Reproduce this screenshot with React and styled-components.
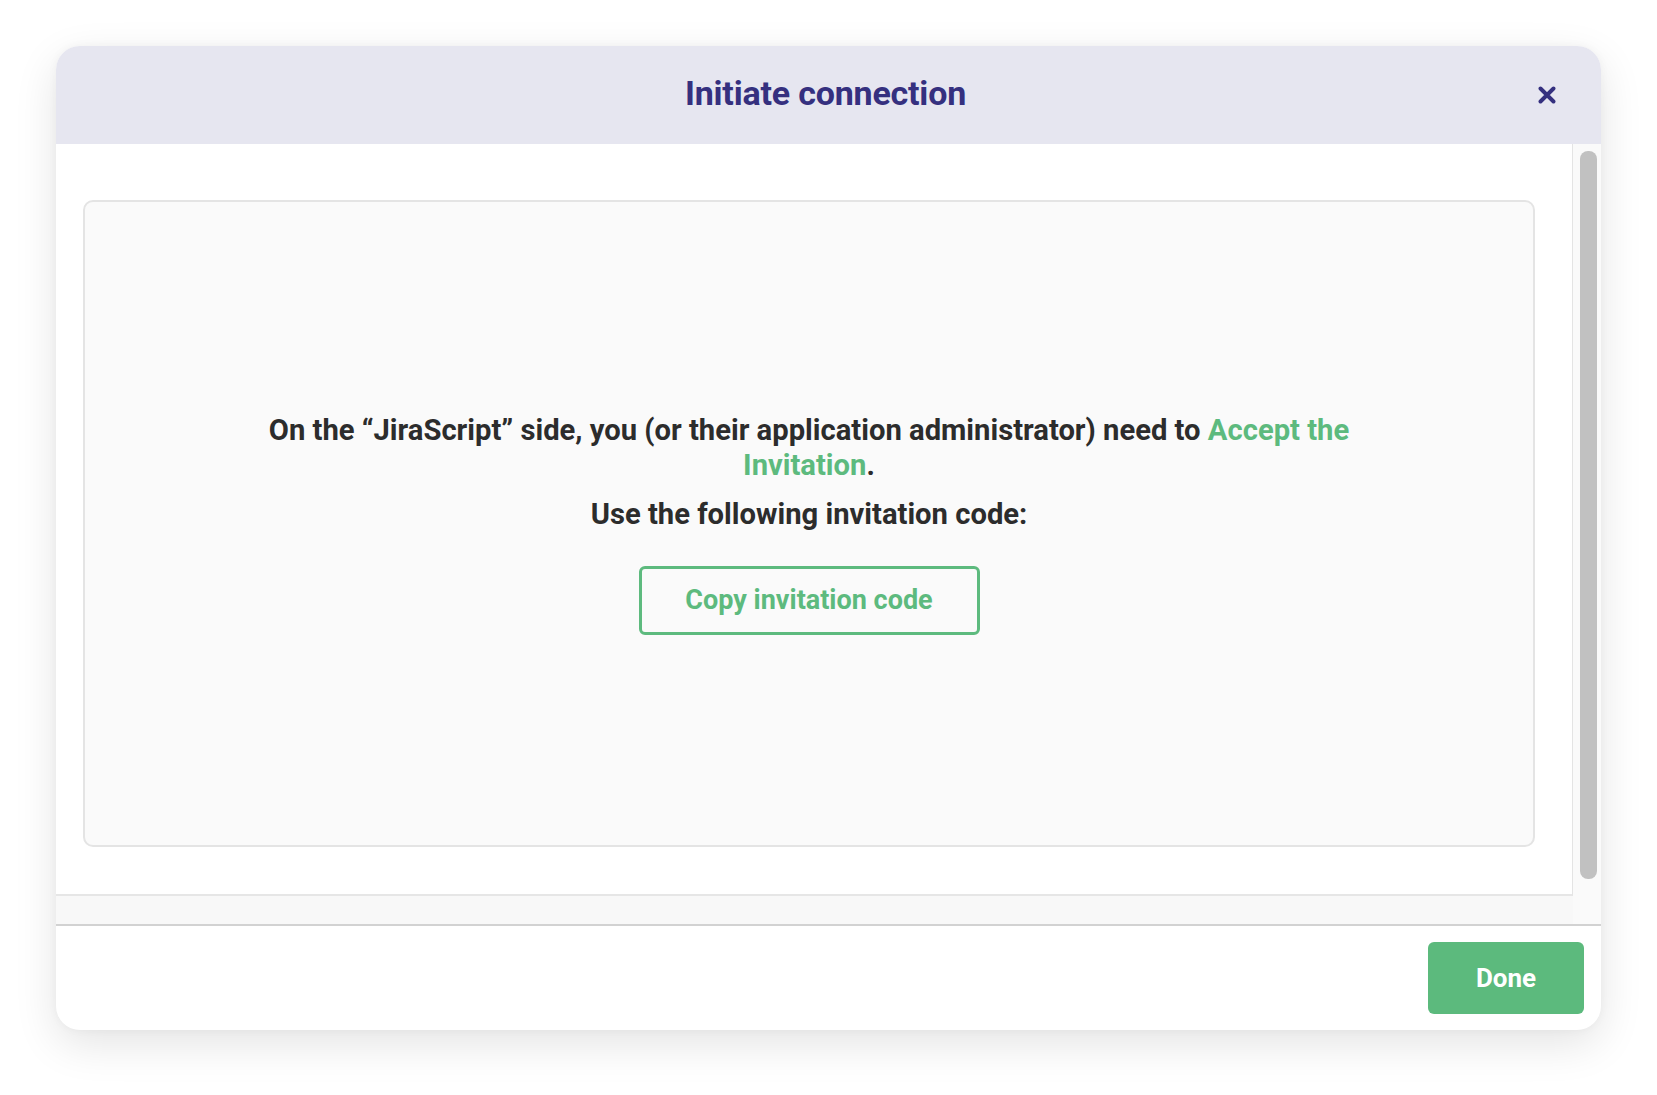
import styled, { createGlobalStyle } from "styled-components";

const GlobalStyle = createGlobalStyle`
  html, body {
    margin: 0;
    padding: 0;
    background: #ffffff;
  }
  body {
    font-family: Roboto, "Liberation Sans", sans-serif;
    -webkit-font-smoothing: antialiased;
  }
`;

const Page = styled.div`
  width: 1657px;
  height: 1095px;
  padding: 46px 56px 0;
  box-sizing: border-box;
`;

const Modal = styled.div`
  width: 1545px;
  height: 984px;
  display: flex;
  flex-direction: column;
  background: #fff;
  border-radius: 24px;
  overflow: hidden;
  box-shadow: 0 14px 44px rgba(0, 0, 0, 0.11), 0 0 10px rgba(0, 0, 0, 0.04);
`;

const Header = styled.header`
  height: 98px;
  flex: none;
  display: grid;
  grid-template-columns: 1fr auto 1fr;
  align-items: center;
  background: #e6e6f0;
`;

const Title = styled.h1`
  grid-column: 2;
  margin: 0 0 4px;
  font-size: 34px;
  font-weight: 700;
  color: #35307f;
  letter-spacing: -0.2px;
  transform: translateX(-3px);
`;

const CloseButton = styled.button`
  grid-column: 3;
  justify-self: end;
  margin-right: 44px;
  border: none;
  background: none;
  padding: 0;
  width: 20px;
  height: 20px;
  display: flex;
  align-items: center;
  justify-content: center;
  color: #35307f;
  cursor: pointer;
`;

const ScrollRegion = styled.div`
  flex: 1;
  display: flex;
  min-height: 0;
`;

const ScrollColumn = styled.div`
  flex: 1;
  display: flex;
  flex-direction: column;
`;

const Viewport = styled.div`
  flex: 1;
  display: flex;
  padding: 56px 37px 47px 27px;
  border-right: 1px solid #e4e4e4;
  border-bottom: 2px solid #e6e6e6;
  background: #fff;
`;

const HTrack = styled.div`
  height: 28px;
  background: #f8f8f8;
`;

const VTrack = styled.div`
  width: 28px;
  flex: none;
  background: #fafafa;
  padding: 7px 4px 45px 7px;
  box-sizing: border-box;
  display: flex;
`;

const Thumb = styled.div`
  flex: 1;
  width: 16px;
  border-radius: 8px;
  background: #c1c1c1;
`;

const Panel = styled.section`
  flex: 1;
  display: flex;
  flex-direction: column;
  align-items: center;
  justify-content: center;
  background: #fafafa;
  border: 2px solid #e4e4e4;
  border-radius: 10px;
  color: #2c2c2c;
`;

const Message = styled.p`
  margin: 0;
  max-width: 1120px;
  text-align: center;
  font-size: 29.2px;
  line-height: 35px;
  font-weight: 700;
  margin-top: ${(p) => p.$gap || 0}px;
`;

const Link = styled.a`
  color: #5dba7e;
  text-decoration: none;
  cursor: pointer;
`;

const OutlineButton = styled.button`
  margin-top: 34px;
  width: 341px;
  height: 69px;
  border: 3px solid #5dba7e;
  border-radius: 6px;
  background: transparent;
  color: #5dba7e;
  font-family: Roboto, "Liberation Sans", sans-serif;
  font-size: 27px;
  font-weight: 700;
  cursor: pointer;
`;

const Footer = styled.footer`
  height: 106px;
  flex: none;
  box-sizing: border-box;
  border-top: 2px solid #d2d2d2;
  display: flex;
  align-items: center;
  justify-content: flex-end;
  padding: 0 17px 0 0;
`;

const PrimaryButton = styled.button`
  width: 156px;
  height: 72px;
  border: none;
  border-radius: 6px;
  background: #5cba7d;
  color: #fff;
  font-family: Roboto, "Liberation Sans", sans-serif;
  font-size: 26px;
  font-weight: 700;
  cursor: pointer;
`;

const CloseIcon = () => (
  <svg width="18" height="18" viewBox="0 0 18 18" fill="none">
    <path
      d="M2.5 2.5L15.5 15.5M15.5 2.5L2.5 15.5"
      stroke="currentColor"
      strokeWidth="3.9"
      strokeLinecap="round"
    />
  </svg>
);

export default function App() {
  return (
    <>
      <GlobalStyle />
      <Page>
        <Modal>
          <Header>
            <Title>Initiate connection</Title>
            <CloseButton aria-label="Close">
              <CloseIcon />
            </CloseButton>
          </Header>
          <ScrollRegion>
            <ScrollColumn>
              <Viewport>
                <Panel>
                  <Message>
                    On the “JiraScript” side, you (or their application administrator) need to{" "}
                    <Link>Accept the Invitation</Link>.
                  </Message>
                  <Message $gap={14}>Use the following invitation code:</Message>
                  <OutlineButton>Copy invitation code</OutlineButton>
                </Panel>
              </Viewport>
              <HTrack />
            </ScrollColumn>
            <VTrack>
              <Thumb />
            </VTrack>
          </ScrollRegion>
          <Footer>
            <PrimaryButton>Done</PrimaryButton>
          </Footer>
        </Modal>
      </Page>
    </>
  );
}
